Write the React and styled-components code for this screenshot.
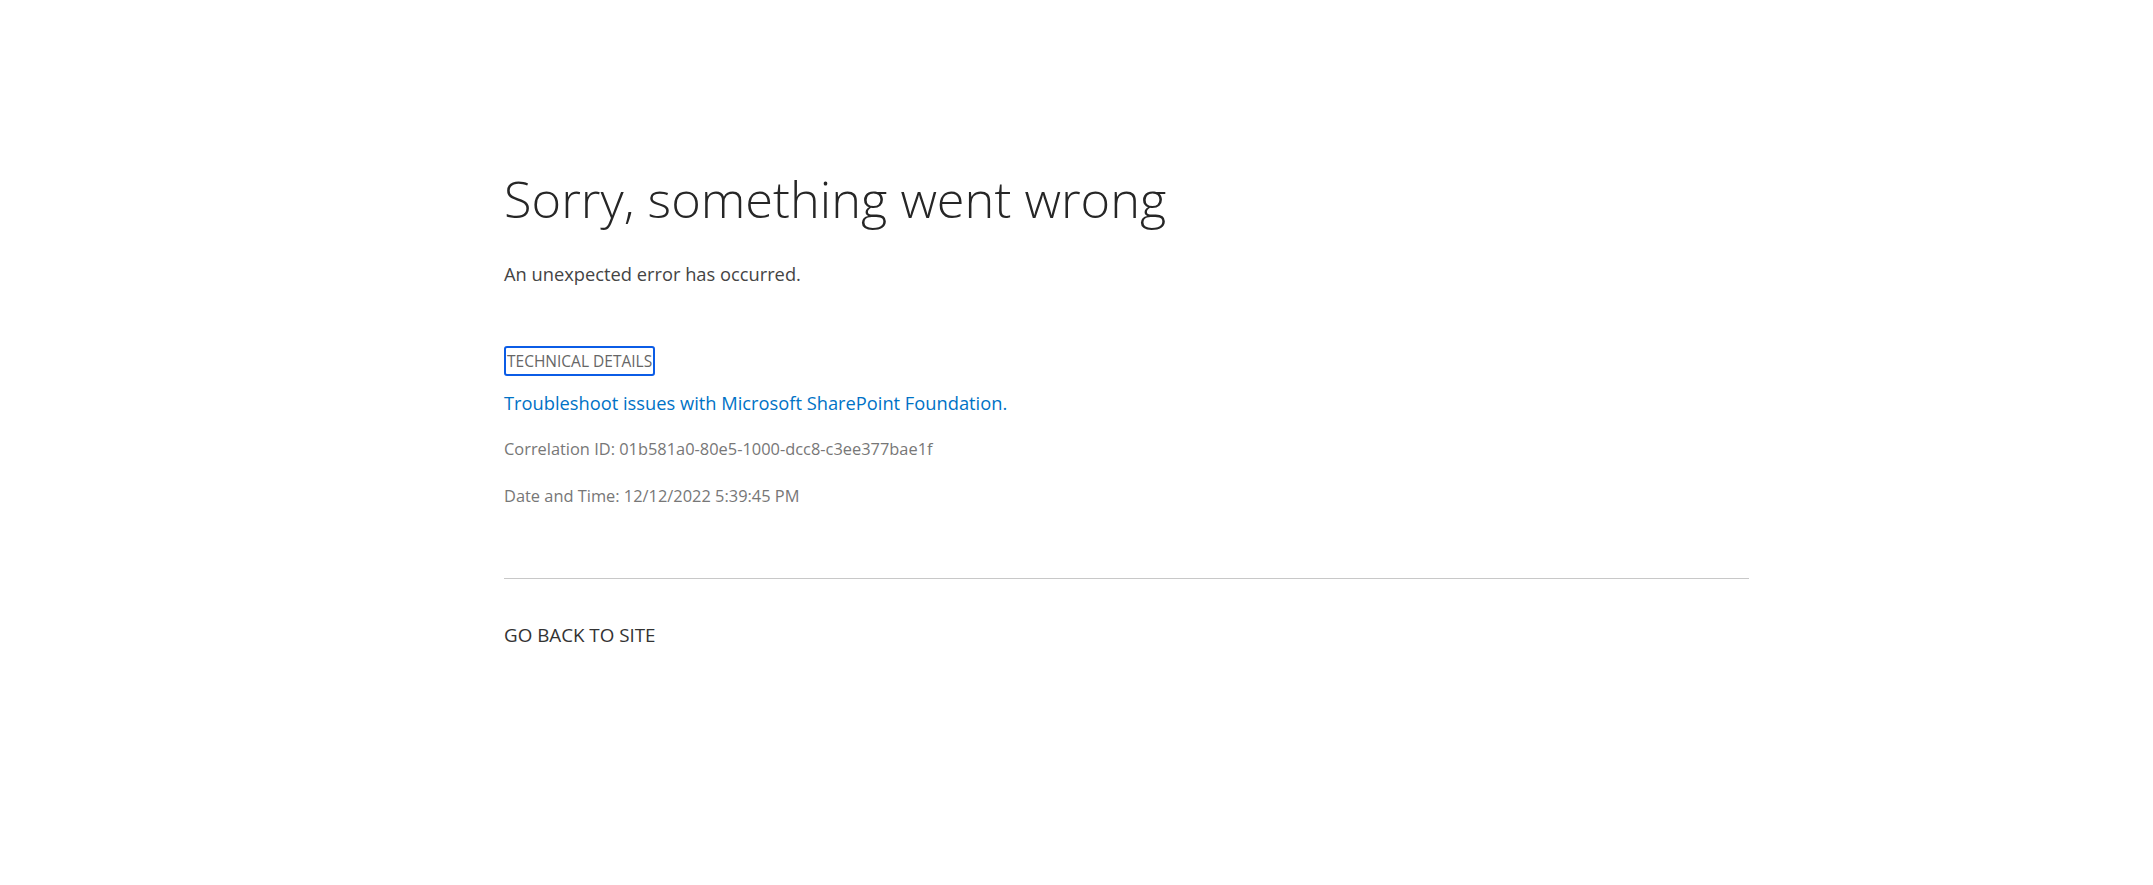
import styled, { createGlobalStyle } from "styled-components";

const Global = createGlobalStyle`
	html, body {
		margin: 0;
		padding: 0;
		background: #fff;
	}
	body {
		font-family: "Open Sans", "Noto Sans", sans-serif;
		color: #333;
	}
`;

// layout
const Page = styled.main`
	padding: 167px 0 0 504px;
`;
const Content = styled.div`
	width: 1245px;
	display: flex;
	flex-direction: column;
	align-items: flex-start;
`;
// texts
const Title = styled.h1`
	margin: 0;
	font-size: 50.5px;
	line-height: 64px;
	font-weight: 300;
	color: #262626;
`;
const Message = styled.p`
	margin: 29px 0 0;
	font-size: 18.3px;
	line-height: 28px;
	color: #444;
`;
const DetailsToggle = styled.button`
	margin-top: 58px;
	padding: 0 1px;
	border: 2px solid #0b5ce6;
	border-radius: 3px;
	background: none;
	font-family: inherit;
	font-size: 15.5px;
	line-height: 26px;
	color: #666;
	text-transform: uppercase;
	cursor: pointer;
`;
const HelpLink = styled.a`
	margin-top: 13px;
	font-size: 18.3px;
	line-height: 28px;
	color: #0072c6;
	text-decoration: none;
`;
const Info = styled.p`
	margin: ${(props) => props.gap}px 0 0;
	font-size: 16.4px;
	line-height: 26px;
	color: #777;
`;
const Divider = styled.hr`
	width: 100%;
	margin: 69px 0 0;
	border: 0;
	border-top: 1px solid #c8c8c8;
`;
const BackLink = styled.a`
	margin-top: 43px;
	font-size: 18.8px;
	line-height: 26px;
	color: #333;
	text-transform: uppercase;
	text-decoration: none;
`;

const App = () => {
	return (
		<>
			<Global />
			<Page>
				<Content>
					<Title>Sorry, something went wrong</Title>
					<Message>An unexpected error has occurred.</Message>
					<DetailsToggle>Technical Details</DetailsToggle>
					<HelpLink href='#'>Troubleshoot issues with Microsoft SharePoint Foundation.</HelpLink>
					<Info gap={19}>Correlation ID: 01b581a0-80e5-1000-dcc8-c3ee377bae1f</Info>
					<Info gap={21}>Date and Time: 12/12/2022 5:39:45 PM</Info>
					<Divider />
					<BackLink href='#'>Go back to site</BackLink>
				</Content>
			</Page>
		</>
	);
};
export default App;
